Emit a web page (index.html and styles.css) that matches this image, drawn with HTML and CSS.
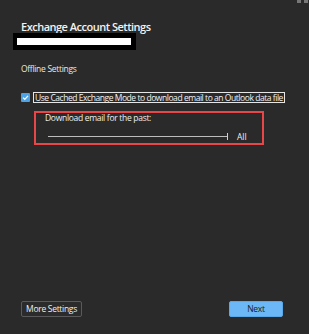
FILE: index.html
```html
<!DOCTYPE html>
<html>
<head>
<meta charset="utf-8">
<link rel="stylesheet" href="styles.css">
</head>
<body>
<div class="dialog">
  <div class="winctl"><span></span><span></span></div>
  <h1 class="title">Exchange Account Settings</h1>
  <div class="redact"><div class="redact-bar"></div></div>
  <div class="section">Offline Settings</div>
  <div class="check-row">
    <span class="checkbox">
      <svg width="9" height="9" viewBox="0 0 9 9"><path d="M2 4.6 L3.8 6.3 L7 2.8" fill="none" stroke="#fff" stroke-width="1.2"/></svg>
    </span>
    <span class="check-label">Use Cached Exchange Mode to download email to an Outlook data file</span>
  </div>
  <div class="download-box">
    <div class="dl-label">Download email for the past:</div>
    <div class="slider-row">
      <div class="slider"><div class="track"></div><div class="tick"></div></div>
      <span class="slider-val">All</span>
    </div>
  </div>
  <div class="spacer"></div>
  <div class="footer">
    <button class="btn btn-secondary">More Settings</button>
    <button class="btn btn-primary">Next</button>
  </div>
</div>
</body>
</html>
```
FILE: styles.css
```css
html, body {
  margin: 0;
  padding: 0;
  background: #2a2a2a;
}
body {
  width: 309px;
  height: 334px;
  overflow: hidden;
  font-family: "Open Sans", "Noto Sans", sans-serif;
  color: #ffffff;
}
.dialog {
  position: relative;
  height: 334px;
  box-sizing: border-box;
  padding: 21px 26px 17px 21px;
  display: flex;
  flex-direction: column;
}
.winctl {
  position: absolute;
  top: 0;
  right: 1px;
  display: flex;
  gap: 3px;
}
.winctl span {
  width: 4px;
  height: 3px;
  background: #777;
}
.title {
  margin: 0;
  font-size: 11px;
  font-weight: 600;
  line-height: 12px;
  letter-spacing: -0.5px;
  color: #f2f2f2;
}
.redact {
  margin: 0 0 0 -8px;
  width: 123px;
  height: 17px;
  background: #000;
  box-sizing: border-box;
  padding: 5px 0 0 4px;
}
.redact-bar {
  width: 114px;
  height: 7px;
  background: #fff;
}
.section {
  margin-top: 13px;
  font-size: 8.5px;
  line-height: 12px;
  letter-spacing: -0.3px;
  color: #e8e8e8;
}
.check-row {
  margin-top: 17px;
  display: flex;
  align-items: center;
  gap: 3px;
}
.checkbox {
  width: 9px;
  height: 9px;
  background: #4ea3e6;
  border-radius: 1px;
  display: flex;
}
.check-label {
  border: 1px solid #e6e6e6;
  padding: 0 1px;
  font-size: 8.5px;
  line-height: 9px;
  letter-spacing: -0.45px;
  color: #f0f0f0;
  white-space: nowrap;
}
.download-box {
  margin: 8px 0 0 13px;
  width: 230px;
  height: 34px;
  box-sizing: border-box;
  border: 2px solid #e8474a;
  padding: 0 0 0 9px;
}
.dl-label {
  font-size: 8.5px;
  line-height: 10px;
  letter-spacing: -0.3px;
  color: #eeeeee;
}
.slider-row {
  margin-top: 9px;
  display: flex;
  align-items: center;
}
.slider {
  position: relative;
  width: 180px;
  height: 8px;
  margin-left: 3px;
}
.track {
  position: absolute;
  left: 0;
  right: 0;
  top: 3px;
  height: 1px;
  background: #bdbdbd;
}
.tick {
  position: absolute;
  right: 0;
  top: 0;
  width: 1px;
  height: 7px;
  background: #d0d0d0;
}
.slider-val {
  margin-left: 9px;
  font-size: 8.5px;
  line-height: 10px;
  color: #eeeeee;
}
.spacer {
  flex: 1;
}
.footer {
  display: flex;
  justify-content: space-between;
}
.btn {
  height: 16px;
  box-sizing: border-box;
  border-radius: 2px;
  font-family: "Open Sans", "Noto Sans", sans-serif;
  font-size: 8.5px;
  line-height: 14px;
  letter-spacing: -0.3px;
  padding: 0;
}
.btn-secondary {
  width: 61px;
  background: #2b2b2b;
  border: 1px solid #5a5a5a;
  color: #f0f0f0;
}
.btn-primary {
  width: 54px;
  background: #6cb8f6;
  border: 1px solid #5aa8e8;
  color: #1a1a1a;
}
```
